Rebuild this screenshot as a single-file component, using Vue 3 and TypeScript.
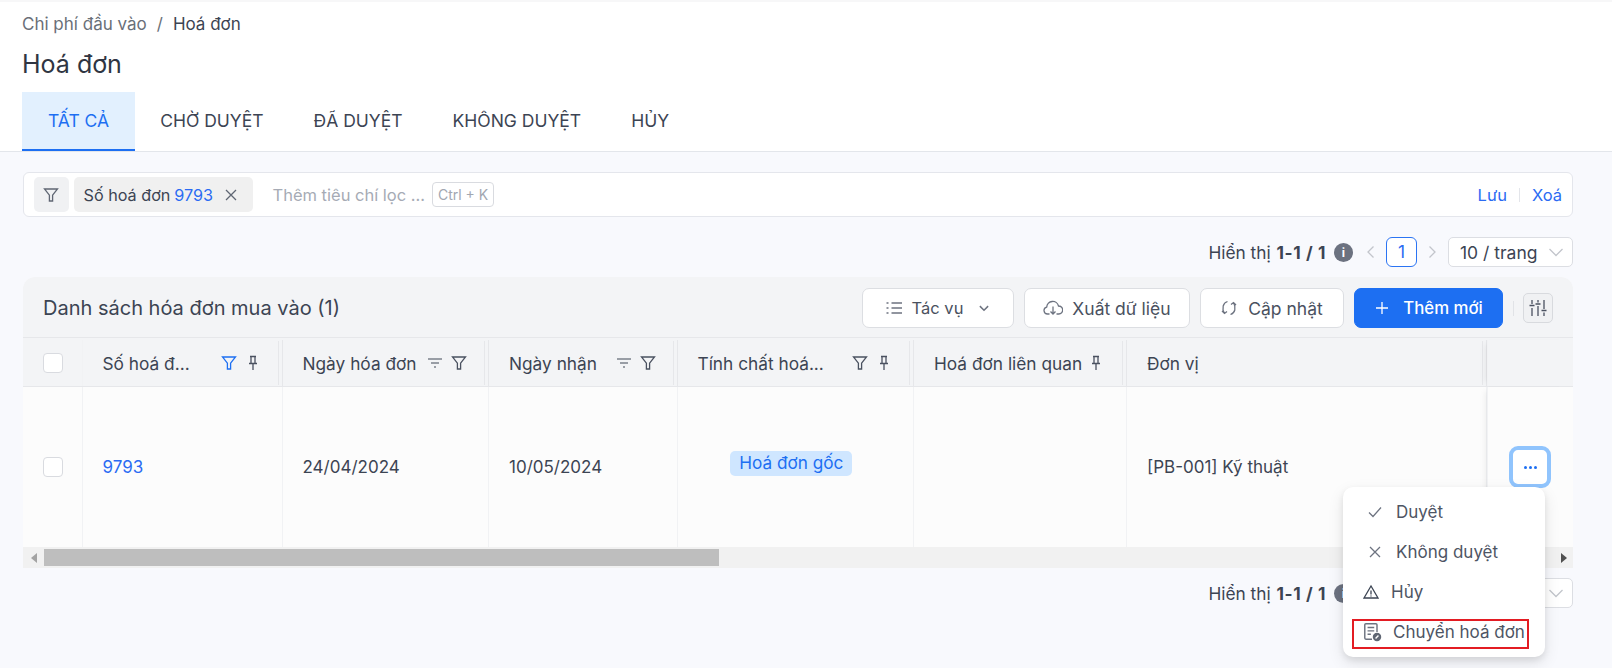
<script setup lang="ts">
interface Column {
    label: string;
    icons: string[];
    active?: boolean;
    tight?: boolean;
}

const icons: Record<string, string> = {
    filter: 'M1.5 2h13L9.6 8.2v5.8H6.4V8.2z',
    pin: 'M5 1.5h6M6 1.5v7M10 1.5v7M4 8.5h8M8 8.5V15',
    sort: 'M1 4h14M4 8h8M7 12h2',
    close: 'M3 3l10 10M13 3L3 13',
    check: 'M2 8.5l4 4 8-9',
    warn: 'M8 2L1 14h14zM8 6.5v4M8 11.6v1',
    left: 'M10.5 2.5L5 8l5.5 5.5',
    right: 'M5.5 2.5L11 8l-5.5 5.5',
    down: 'M1.5 5L8 11.5 14.5 5',
};

const tabs = ['TẤT CẢ', 'CHỜ DUYỆT', 'ĐÃ DUYỆT', 'KHÔNG DUYỆT', 'HỦY'];

const columns: Column[] = [
    { label: 'Số hoá đ...', icons: ['filter', 'pin'], active: true },
    { label: 'Ngày hóa đơn', icons: ['sort', 'filter'] },
    { label: 'Ngày nhận', icons: ['sort', 'filter'] },
    { label: 'Tính chất hoá...', icons: ['filter', 'pin'] },
    { label: 'Hoá đơn liên quan', icons: ['pin'], tight: true },
    { label: 'Đơn vị', icons: [] },
];
</script>

<template>
    <div class="page">
        <header class="head">
            <div class="crumbs"><span class="crumb">Chi phí đầu vào</span><span class="crumb">/</span><span>Hoá đơn</span></div>
            <h1 class="title">Hoá đơn</h1>
            <nav class="tabs">
                <a v-for="(t, i) in tabs" :key="t" class="tab" :class="{ 'tab--on': i === 0 }">{{ t }}</a>
            </nav>
        </header>

        <main class="body">
            <section class="filters">
                <button class="filters__btn">
                    <svg class="ico" viewBox="0 0 16 16"><path :d="icons.filter" /></svg>
                </button>
                <div class="chip">
                    <span>Số hoá đơn</span><span class="link">9793</span>
                    <svg class="ico chip__x" viewBox="0 0 16 16"><path :d="icons.close" /></svg>
                </div>
                <span class="hint">Thêm tiêu chí lọc ...</span>
                <kbd class="kbd">Ctrl + K</kbd>
                <div class="filters__end">
                    <a class="link">Lưu</a><i class="sep"></i><a class="link">Xoá</a>
                </div>
            </section>

            <div class="pager">
                <span>Hiển thị <b>1-1 / 1</b></span>
                <i class="info">i</i>
                <svg class="ico ico--mute" viewBox="0 0 16 16"><path :d="icons.left" /></svg>
                <span class="page-no">1</span>
                <svg class="ico ico--mute" viewBox="0 0 16 16"><path :d="icons.right" /></svg>
                <div class="size">10 / trang
                    <svg class="ico ico--mute" viewBox="0 0 16 16"><path :d="icons.down" /></svg>
                </div>
            </div>

            <section class="card">
                <div class="bar">
                    <h2 class="bar__title">Danh sách hóa đơn mua vào (1)</h2>
                    <button class="btn btn--task">
                        <svg class="ico ico--soft" viewBox="0 0 16 16"><path d="M5.5 3H16M5.5 8H16M5.5 13H16M0.5 3h2M0.5 8h2M0.5 13h2" /></svg>
                        <span>Tác vụ</span>
                        <svg class="ico ico--small ico--soft" viewBox="0 0 16 16"><path d="M2.5 5.5L8 11l5.5-5.5" stroke-width="2" /></svg>
                    </button>
                    <button class="btn btn--export">
                        <svg class="ico ico--cloud ico--soft" viewBox="0 0 20 16"><path d="M6.5 14H4.5a3.5 3.5 0 0 1-.8-6.9A6 6 0 0 1 15.5 6a4 4 0 0 1 .3 8H13.5M10 6.5V14M7.5 11.5L10 14l2.5-2.5" /></svg>
                        <span>Xuất dữ liệu</span>
                    </button>
                    <button class="btn btn--sync">
                        <svg class="ico ico--soft" viewBox="0 0 16 16"><path d="M6.5 1.5C2 3 .5 8 3.5 13.5M1 11l2.5 2.5L6 11.5M9.5 14.5C14 13 15.5 8 12.5 2.5M15 5l-2.500-2.500L10 4.500" /></svg>
                        <span>Cập nhật</span>
                    </button>
                    <button class="btn btn--add">
                        <svg class="ico" viewBox="0 0 16 16"><path d="M8 2v12M2 8h12" /></svg>
                        <span>Thêm mới</span>
                    </button>
                    <i class="bar__sep"></i>
                    <button class="tune">
                        <svg class="ico ico--tune" viewBox="0 0 20 20"><path d="M4 2v4M4 10v8M1.5 7.5h5M10 2v2.5M10 8v10M7.5 6h5M16 2v9M16 14.5V18M13.5 12.5h5" /></svg>
                    </button>
                </div>

                <div class="grid grid--head">
                    <div class="cell cell--check"><i class="box"></i></div>
                    <div
                        v-for="c in columns"
                        :key="c.label"
                        class="cell cell--head"
                        :class="{ 'cell--tight': c.tight }"
                    >
                        <span class="cell__label">{{ c.label }}</span>
                        <span class="cell__icons">
                            <svg
                                v-for="n in c.icons"
                                :key="n"
                                class="ico"
                                :class="{ 'ico--on': c.active && n === 'filter', 'ico--sort': n === 'sort' }"
                                viewBox="0 0 16 16"
                            ><path :d="icons[n]" /></svg>
                        </span>
                    </div>
                    <div class="cell cell--fixed"></div>
                </div>

                <div class="grid grid--row">
                    <div class="cell cell--check"><i class="box"></i></div>
                    <div class="cell"><a class="link">9793</a></div>
                    <div class="cell">24/04/2024</div>
                    <div class="cell">10/05/2024</div>
                    <div class="cell"><span class="badge">Hoá đơn gốc</span></div>
                    <div class="cell"></div>
                    <div class="cell">[PB-001] Kỹ thuật</div>
                    <div class="cell cell--fixed cell--more">
                        <button class="more"><span></span><span></span><span></span></button>
                    </div>
                </div>

                <div class="scroll">
                    <i class="scroll__left"></i>
                    <div class="scroll__track"><div class="scroll__thumb"></div></div>
                    <i class="scroll__right"></i>
                </div>

                <ul class="menu">
                    <li class="menu__item">
                        <svg class="ico ico--gap" viewBox="0 0 16 16"><path :d="icons.check" /></svg>Duyệt
                    </li>
                    <li class="menu__item">
                        <svg class="ico ico--gap" viewBox="0 0 16 16"><path :d="icons.close" /></svg>Không duyệt
                    </li>
                    <li class="menu__item menu__item--warn">
                        <svg class="ico ico--gap" viewBox="0 0 16 16"><path :d="icons.warn" /></svg>Hủy
                    </li>
                    <li class="menu__item menu__item--mark">
                        <svg class="ico ico--gap" viewBox="0 0 18 18">
                            <path d="M9 15.5H3.5a1 1 0 0 1-1-1v-12a1 1 0 0 1 1-1h9a1 1 0 0 1 1 1V9M5 5h6M5 8h6M5 11h3" />
                            <circle cx="13.5" cy="13.5" r="3.8" fill="#5f6673" stroke="none" />
                            <path d="M12.2 14.8l2.6-2.6" stroke="#fff" />
                        </svg>Chuyển hoá đơn
                    </li>
                </ul>
            </section>

            <div class="pager pager--foot">
                <span>Hiển thị <b>1-1 / 1</b></span>
                <i class="info">i</i>
                <svg class="ico ico--mute" viewBox="0 0 16 16"><path :d="icons.left" /></svg>
                <span class="page-no">1</span>
                <svg class="ico ico--mute" viewBox="0 0 16 16"><path :d="icons.right" /></svg>
                <div class="size">10 / trang
                    <svg class="ico ico--mute" viewBox="0 0 16 16"><path :d="icons.down" /></svg>
                </div>
            </div>
        </main>
    </div>
</template>

<style>
html, body {
    margin: 0;
    background: #f8f9fd;
}
</style>

<style scoped>
.page {
    height: 668px;
    overflow: hidden;
    font-family: Inter, "Noto Sans", sans-serif;
    font-size: 17px;
    color: #3c4453;
    background: #f8f9fd;
}

.head {
    background: #fff;
    border-top: 2px solid #f7f7f8;
    border-bottom: 1px solid #e3e6eb;
    padding: 0 39px 0 22px;
    height: 149px;
}

.crumbs {
    display: flex;
    gap: 10px;
    height: 22px;
    padding-top: 11px;
    line-height: 22px;
    font-size: 17px;
}

.crumb {
    color: #6a6f78;
}

.title {
    margin: 13px 0 0;
    font-size: 25px;
    line-height: 32px;
    font-weight: 400;
    color: #2f3542;
}

.tabs {
    display: flex;
    margin-top: 12px;
}

.tab {
    padding: 0 25px;
    height: 59px;
    box-sizing: border-box;
    line-height: 58px;
    font-size: 17.5px;
}

.tab--on {
    padding: 0 26px;
    background: #e2f0fe;
    color: #1d6ff2;
    border-bottom: 2px solid #1d6ff2;
}

.body {
    padding: 20px 39px 0 22.5px;
}

.filters {
    display: flex;
    align-items: center;
    height: 43px;
    padding: 0 10px;
    background: #fff;
    border: 1px solid #e4e6ec;
    border-radius: 6px;
}

.filters__btn {
    width: 35px;
    height: 35px;
    border: 0;
    border-radius: 5px;
    background: #f0f1f3;
    padding: 0;
    color: #5f6673;
    display: flex;
    align-items: center;
    justify-content: center;
}

.chip {
    margin-left: 5px;
    height: 35px;
    width: 179px;
    box-sizing: border-box;
    padding: 0 14px 0 10px;
    display: flex;
    align-items: center;
    gap: 4px;
    background: #f0f0f0;
    border-radius: 5px;
    font-size: 16.2px;
    white-space: nowrap;
}

.chip__x {
    margin-left: auto;
    color: #5f6673;
}

.link {
    color: #2b6bf3;
}

.hint {
    margin-left: 20px;
    color: #a6abb5;
    font-size: 16.5px;
}

.kbd {
    margin-left: 7px;
    height: 25px;
    width: 62px;
    box-sizing: border-box;
    border: 1px solid #d9dbe0;
    border-radius: 4px;
    background: #fff;
    color: #a2a7b1;
    font-family: inherit;
    font-size: 14px;
    line-height: 23px;
    text-align: center;
}

.filters__end {
    margin-left: auto;
    display: flex;
    align-items: center;
    gap: 12px;
    font-size: 16.5px;
}

.sep {
    width: 1px;
    height: 14px;
    background: #e3e5ea;
}

.pager {
    display: flex;
    align-items: center;
    justify-content: flex-end;
    height: 30px;
    margin-top: 20px;
    font-size: 17.3px;
}

.pager--foot {
    margin-top: 10px;
}

.pager b {
    font-weight: 700;
    letter-spacing: 0.6px;
    margin-left: 1px;
}

.info {
    margin-left: 8px;
    width: 19px;
    height: 19px;
    border-radius: 50%;
    background: #6c7280;
    color: #fff;
    font-style: normal;
    font-weight: 700;
    font-size: 12px;
    line-height: 19px;
    text-align: center;
}

.pager .ico--mute:first-of-type {
    margin-left: 10px;
}

.page-no {
    margin: 0 7px 0 7px;
    width: 31px;
    height: 30px;
    box-sizing: border-box;
    border: 1px solid #2b74f3;
    border-radius: 6px;
    background: #fff;
    color: #2b6bf3;
    text-align: center;
    line-height: 28px;
}

.size {
    margin-left: 8px;
    width: 125px;
    height: 30px;
    box-sizing: border-box;
    padding: 0 11px;
    background: #fff;
    border: 1px solid #dcdee3;
    border-radius: 5px;
    display: flex;
    align-items: center;
    justify-content: space-between;
    white-space: nowrap;
    font-size: 17.5px;
}

.card {
    position: relative;
    margin-top: 10px;
    background: #fcfcfc;
    border-radius: 12px 12px 0 0;
}

.bar {
    height: 61px;
    display: flex;
    align-items: center;
    background: #f3f4f6;
    border-radius: 12px 12px 0 0;
    border-bottom: 1px solid #e6e7ea;
    padding: 2px 20px 0 20.5px;
    box-sizing: border-box;
}

.bar__title {
    margin: 0 auto 0 0;
    font-size: 20px;
    font-weight: 400;
    white-space: nowrap;
}

.btn {
    height: 40px;
    box-sizing: border-box;
    margin-left: 10px;
    display: flex;
    align-items: center;
    justify-content: center;
    background: #fff;
    border: 1px solid #dcdee2;
    border-radius: 7px;
    color: #4a5160;
    font-family: inherit;
    font-size: 17.5px;
    padding: 0;
    white-space: nowrap;
}

.btn--task { width: 152px; gap: 10px; font-size: 16.5px; }
.btn--export { width: 166px; gap: 9px; }
.btn--sync { width: 144px; gap: 11px; }
.btn--add {
    width: 149px;
    gap: 13px;
    background: #1d6ff2;
    border-color: #1d6ff2;
    color: #fff;
    font-weight: 500;
    font-size: 16.8px;
}

.btn--task .ico--small {
    margin-left: 5px;
}

.bar__sep {
    margin-left: 10px;
    width: 1px;
    height: 15px;
    background: #e1e3e7;
}

.tune {
    margin-left: 9px;
    width: 30px;
    height: 30px;
    padding: 0;
    display: flex;
    align-items: center;
    justify-content: center;
    background: #f0f1f3;
    border: 1px solid #d8dade;
    border-radius: 5px;
    color: #4a5160;
}

.ico {
    width: 16px;
    height: 16px;
    flex: none;
    fill: none;
    stroke: currentColor;
    stroke-width: 1.3;
}

.ico--small { width: 12px; height: 12px; }
.ico--cloud { width: 20px; }
.ico--tune { width: 20px; height: 20px; }
.ico--soft { color: #6d7380; }
.ico--mute { color: #c2c5cb; }
.ico--on { color: #1d6ff2; }
.ico--sort { opacity: 0.7; }
.ico--gap { margin-right: 13px; color: #6d7380; }

.grid {
    display: grid;
    grid-template-columns: 60px 200px 206.5px 188.5px 236.5px 213px 360px 86px;
}

.grid--head {
    height: 49px;
    padding-top: 2px;
    background: #f3f4f6;
    border-bottom: 1px solid #e6e7ea;
    box-sizing: border-box;
}

.grid--row {
    height: 160px;
    font-size: 17px;
}

.cell {
    display: flex;
    align-items: center;
    padding: 0 20px;
    box-sizing: border-box;
    border-right: 1px solid #f1f2f4;
    min-width: 0;
    position: relative;
}

.cell--check {
    padding: 0 0 0 20px;
}

.cell--head {
    border-right: 1px solid #e6e7ea;
    font-size: 17.3px;
    justify-content: space-between;
    padding-right: 21px;
}

.cell--tight {
    justify-content: flex-start;
    gap: 6px;
}

.cell--head:not(:last-of-type)::after {
    content: "";
    position: absolute;
    right: 3px;
    top: 1px;
    bottom: 1px;
    width: 1px;
    background: #e6e7ea;
}

.grid--row .cell:nth-child(5) {
    justify-content: center;
    padding-right: 28px;
}

.cell__label {
    white-space: nowrap;
}

.cell__icons {
    display: flex;
    gap: 8px;
    color: #4a5160;
}

.cell--fixed {
    border-right: 0;
    border-left: 1px solid #f1f2f4;
    box-shadow: -6px 0 6px -4px rgba(0, 0, 0, 0.06);
}

.cell--more {
    justify-content: flex-end;
    padding: 0 22px 0 0;
}

.box {
    width: 20px;
    height: 20px;
    box-sizing: border-box;
    background: #fff;
    border: 1px solid #d9dbe0;
    border-radius: 4px;
}

.badge {
    margin-top: -8px;
    padding: 0 9px;
    height: 25px;
    line-height: 24px;
    font-size: 17.2px;
    border-radius: 5px;
    background: #cfe6ff;
    color: #1d6ff2;
    white-space: nowrap;
}

.more {
    width: 42px;
    height: 42px;
    padding: 0;
    border: 4px solid #90c4fd;
    border-radius: 9px;
    background: #fff;
    display: flex;
    align-items: center;
    justify-content: center;
    gap: 2px;
}

.more span {
    width: 3px;
    height: 3px;
    border-radius: 50%;
    background: #1d6ff2;
}

.scroll {
    height: 21px;
    display: flex;
    align-items: center;
    background: #f1f1f1;
}

.scroll__left,
.scroll__right {
    width: 0;
    height: 0;
    border-style: solid;
    flex: none;
}

.scroll__left {
    margin-left: 8px;
    border-width: 5px 6px 5px 0;
    border-color: transparent #a3a3a3 transparent transparent;
}

.scroll__right {
    margin-left: 4px;
    margin-right: 6px;
    border-width: 5px 0 5px 6px;
    border-color: transparent transparent transparent #505050;
}

.scroll__track {
    flex: 1;
    margin-left: 7px;
}

.scroll__thumb {
    width: 675px;
    height: 17px;
    background: #bebebe;
}

.menu {
    position: absolute;
    top: 210px;
    right: 28px;
    margin: 0;
    padding: 5px 0;
    width: 202px;
    height: 170px;
    box-sizing: border-box;
    list-style: none;
    background: #fff;
    border-radius: 10px;
    box-shadow: 0 6px 16px rgba(0, 0, 0, 0.1), 0 3px 6px rgba(0, 0, 0, 0.08);
    font-size: 17px;
    z-index: 3;
}

.menu__item {
    height: 40px;
    display: flex;
    align-items: center;
    padding-left: 24px;
    color: #4e5564;
    white-space: nowrap;
}

.menu__item--warn {
    padding-left: 20px;
}

.menu__item--warn .ico {
    color: #3c4453;
    margin-right: 12px;
}

.menu__item--mark {
    position: relative;
    padding-left: 19px;
}

.menu__item--mark .ico {
    width: 20px;
    height: 20px;
    margin-right: 11px;
}

.menu__item--mark::after {
    content: "";
    position: absolute;
    left: 9px;
    right: 16px;
    top: 7px;
    bottom: 3px;
    border: 2px solid #e31c23;
}
</style>
